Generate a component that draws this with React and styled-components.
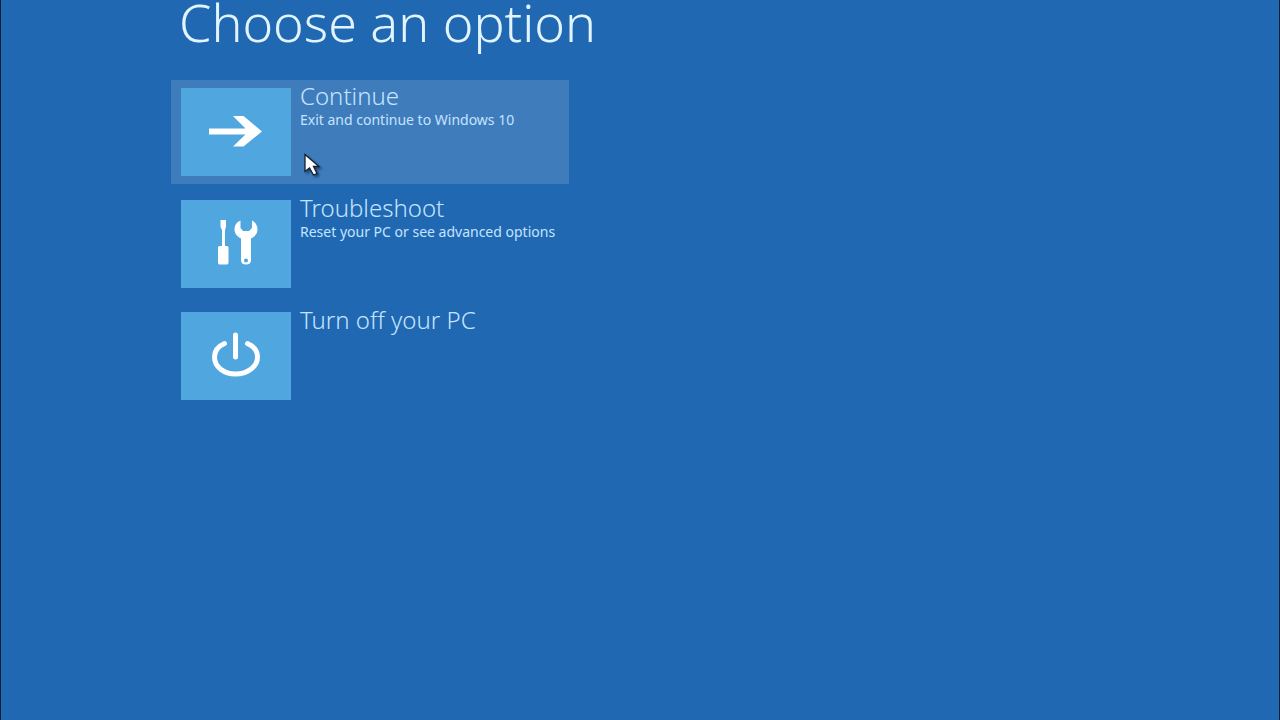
import React from 'react';
import styled, { createGlobalStyle } from 'styled-components';

const options = [
  {
    id: 'continue',
    title: 'Continue',
    detail: 'Exit and continue to Windows 10',
    Icon: ArrowIcon,
    active: true,
  },
  {
    id: 'troubleshoot',
    title: 'Troubleshoot',
    detail: 'Reset your PC or see advanced options',
    Icon: ToolsIcon,
  },
  {
    id: 'power',
    title: 'Turn off your PC',
    Icon: PowerIcon,
  },
];

export default function App() {
  return (
    <Screen>
      <GlobalStyle />
      <Heading>Choose an option</Heading>
      <OptionList>
        {options.map(({ id, title, detail, Icon, active }) => (
          <li key={id}>
            <Option type="button" $active={active}>
              <Tile>
                <Icon />
              </Tile>
              <OptionText>
                <Title>{title}</Title>
                {detail && <Detail>{detail}</Detail>}
              </OptionText>
              {active && <Pointer />}
            </Option>
          </li>
        ))}
      </OptionList>
    </Screen>
  );
}

function ArrowIcon() {
  return (
    <svg width="110" height="88" viewBox="0 0 110 88" aria-hidden="true">
      <path
        fill="#fff"
        d="M28 40.5H64.5L52 28H62.5L81 43.5L62.5 58.500H52L64.5 46.5H28Z"
      />
    </svg>
  );
}

function ToolsIcon() {
  return (
    <svg width="110" height="88" viewBox="0 0 110 88" aria-hidden="true">
      <path
        fill="#fff"
        d="M39.500 20H45V27L44 30V46H46Q47.500 46 47.500 47.500V62.500Q47.500 64.500 46 64.500H38.500Q37 64.500 37 62.500V47.500Q37 46 38.500 46H41V30L39.500 27Z"
      />
      <path
        fill="#fff"
        fillRule="evenodd"
        d="M59.500 20.500V28L62 31H68L71 28V20.500C74.500 22 76.500 25.500 76.500 29.500C76.500 33.500 74 36.500 70 38.500V60Q70 64.500 65 64.500Q60 64.500 60 60V38.500C56 36.500 53.500 33.500 53.500 29.500C53.500 25.500 55.500 22 59.500 20.500ZM65 58.500A2 2 0 1 0 65 62.500A2 2 0 1 0 65 58.500Z"
      />
    </svg>
  );
}

function PowerIcon() {
  return (
    <svg width="110" height="88" viewBox="0 0 110 88" aria-hidden="true">
      <g fill="none" stroke="#fff" strokeWidth="5" strokeLinecap="round">
        <path d="M54.500 23V45" />
        <path d="M43.500 31.500C36.500 34.500 33.500 39.500 33.500 45C33.500 55 43 62 54.500 62S76.500 55 76.500 45C76.500 39.500 73 34.500 66.500 31.500" />
      </g>
    </svg>
  );
}

function Pointer() {
  return (
    <PointerSvg width="18" height="24" viewBox="0 0 18 24" aria-hidden="true">
      <path
        d="M1 1.500V18.500L5.500 15L9.500 22L13 20.500L9.500 13.500H15Z"
        fill="#fff"
        stroke="#14202e"
        strokeWidth="1.300"
      />
    </PointerSvg>
  );
}

const GlobalStyle = createGlobalStyle`
  * {
    box-sizing: border-box;
  }

  body {
    margin: 0;
    background: #2068b2;
    font-family: 'Noto Sans', 'Open Sans', sans-serif;
  }
`;

const Screen = styled.main`
  min-height: 100vh;
  padding: 0 170px;
  border: solid #061f3d;
  border-width: 0 1px;
`;

const Heading = styled.h1`
  margin: 0 0 36px;
  padding-left: 8px;
  color: #e2f4ff;
  font-size: 52px;
  font-weight: 300;
  line-height: 44px;
`;

const OptionList = styled.ul`
  display: flex;
  flex-direction: column;
  gap: 8px;
  max-width: 398px;
  margin: 0;
  padding: 0;
  list-style: none;
`;

const Option = styled.button`
  position: relative;
  display: flex;
  gap: 9px;
  width: 100%;
  padding: 8px 10px;
  border: 0;
  background: ${(props) => (props.$active ? '#3f7cbc' : 'transparent')};
  color: #c4e4ff;
  font-family: inherit;
  text-align: left;
`;

const Tile = styled.span`
  display: flex;
  flex: none;
  background: #50a7df;
`;

const OptionText = styled.span`
  display: flex;
  flex-direction: column;
  gap: 6px;
  white-space: nowrap;
`;

const Title = styled.span`
  font-size: 24px;
  font-weight: 300;
  line-height: 16px;
`;

const Detail = styled.span`
  font-size: 14px;
  line-height: 20px;
`;

const PointerSvg = styled.svg`
  position: absolute;
  top: 73px;
  left: 133px;
  filter: drop-shadow(2px 2px 1px rgba(0, 20, 50, 0.5));
`;
